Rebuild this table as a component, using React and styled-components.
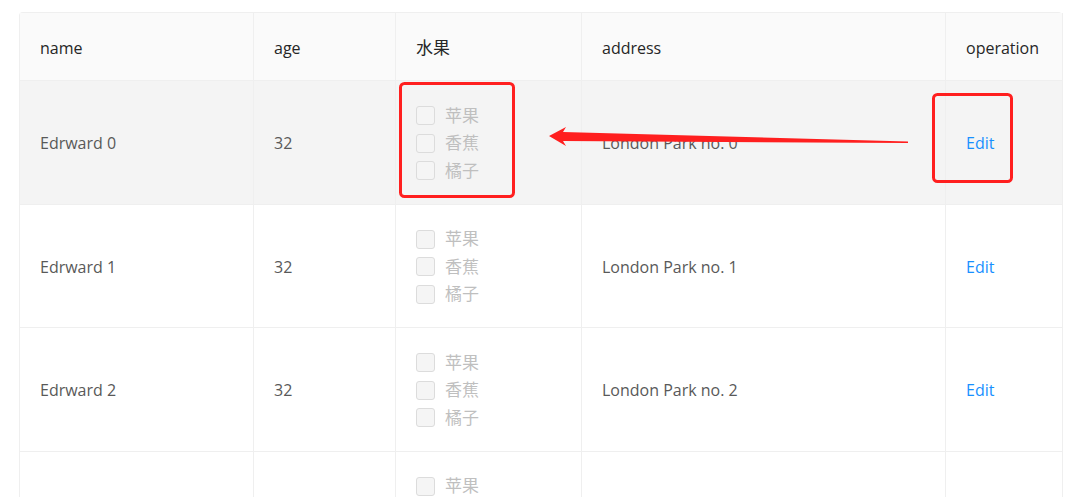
import React from 'react';
import styled, { createGlobalStyle } from 'styled-components';

const GlobalStyle = createGlobalStyle`
  html, body {
    margin: 0;
    padding: 0;
    background: #fff;
    overflow: hidden;
  }
  body {
    font-family: "Open Sans", "Noto Sans CJK SC", sans-serif;
  }
`;

const columns = [
  { key: 'name', title: 'name', width: 234 },
  { key: 'age', title: 'age', width: 142 },
  { key: 'fruit', title: '水果', width: 186, cjk: true },
  { key: 'address', title: 'address', width: 364 },
  { key: 'operation', title: 'operation', width: 117 },
];

const fruits = ['苹果', '香蕉', '橘子'];

const data = [0, 1, 2, 3].map((i) => ({
  key: i,
  name: `Edrward ${i}`,
  age: 32,
  address: `London Park no. ${i}`,
}));

function FruitGroup() {
  return (
    <Group>
      {fruits.map((f) => (
        <CheckLabel key={f}>
          <Box />
          <Cjk>{f}</Cjk>
        </CheckLabel>
      ))}
    </Group>
  );
}

function Annotations() {
  return (
    <Overlay width="1082" height="497" viewBox="0 0 1082 497">
      <rect x="400.5" y="83.5" width="113" height="113" rx="4" fill="none" stroke="#ff1f1f" strokeWidth="3" />
      <rect x="933.5" y="94.5" width="78" height="87" rx="4" fill="none" stroke="#ff1f1f" strokeWidth="3" />
      <polygon
        points="549,136 566,127 563,132 908,141.5 908,143 563,141 566,146"
        fill="#ff1f1f"
      />
    </Overlay>
  );
}

export default function App() {
  return (
    <Page>
      <GlobalStyle />
      <TableWrap>
        <Table>
          <colgroup>
            {columns.map((c) => (
              <col key={c.key} style={{ width: c.width }} />
            ))}
          </colgroup>
          <thead>
            <tr>
              {columns.map((c) => (
                <Th key={c.key}>{c.cjk ? <Cjk>{c.title}</Cjk> : c.title}</Th>
              ))}
            </tr>
          </thead>
          <tbody>
            {data.map((row) => (
              <Row key={row.key} $active={row.key === 0}>
                <Td>{row.name}</Td>
                <Td>{row.age}</Td>
                <Td>
                  <FruitGroup />
                </Td>
                <Td>{row.address}</Td>
                <Td>
                  <EditLink>Edit</EditLink>
                </Td>
              </Row>
            ))}
          </tbody>
        </Table>
      </TableWrap>
      <Annotations />
    </Page>
  );
}

const Page = styled.div`
  position: relative;
  width: 1082px;
  height: 497px;
  padding: 12px 0 0 19px;
  box-sizing: border-box;
  overflow: hidden;
`;

const TableWrap = styled.div`
  width: 1043px;
  border-top: 1px solid #efefef;
  border-left: 1px solid #efefef;
  border-radius: 4px 4px 0 0;
  box-sizing: border-box;
`;

const Table = styled.table`
  width: 1042px;
  table-layout: fixed;
  border-collapse: separate;
  border-spacing: 0;
  font-size: 16px;
`;

const Th = styled.th`
  text-align: left;
  font-weight: 400;
  color: #262626;
  background: #fafafa;
  padding: 23px 20px 20px;
  height: 24px;
  line-height: 24px;
  border-right: 1px solid #efefef;
  border-bottom: 1px solid #efefef;
`;

const Row = styled.tr`
  background: ${(p) => (p.$active ? '#f4f4f4' : '#fff')};
`;

const Td = styled.td`
  color: #595959;
  padding: 21px 20px 19px;
  line-height: 24px;
  vertical-align: middle;
  border-right: 1px solid #efefef;
  border-bottom: 1px solid #efefef;
`;

const Cjk = styled.span`
  font-size: 17px;
`;

const Group = styled.div`
  display: flex;
  flex-direction: column;
`;

const CheckLabel = styled.label`
  display: flex;
  align-items: center;
  gap: 10px;
  height: 27.5px;
  color: #bfbfbf;
  font-size: 16px;
`;

const Box = styled.span`
  width: 19px;
  height: 19px;
  box-sizing: border-box;
  border: 1px solid #dcdcdc;
  border-radius: 3px;
  background: #f5f5f5;
  flex-shrink: 0;
`;

const EditLink = styled.a`
  color: #1890ff;
  cursor: pointer;
`;

const Overlay = styled.svg`
  position: absolute;
  left: 0;
  top: 0;
  pointer-events: none;
`;
